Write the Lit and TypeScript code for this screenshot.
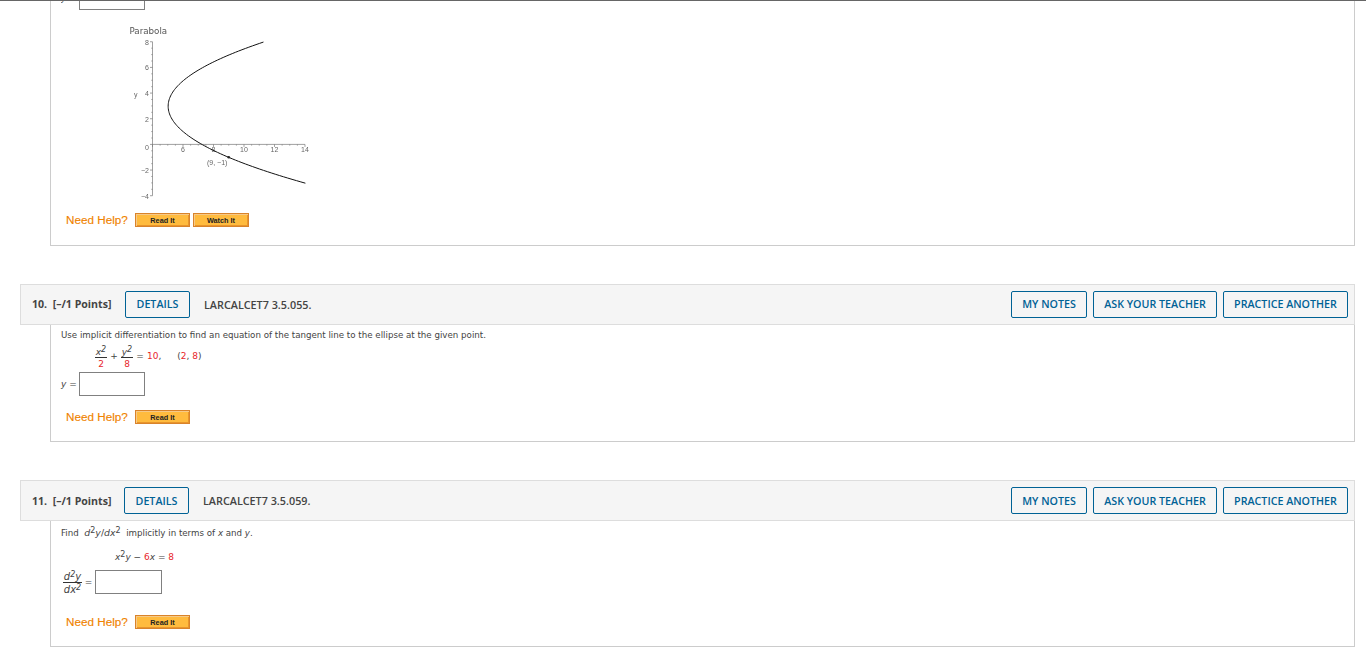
import { LitElement, html, css, svg } from "lit";
import { customElement } from "lit/decorators.js";

const xp = (x: number) => 152.5 + (x - 4) * 15.25 - 120;
const yp = (y: number) => 144.4 - y * 12.83 - 20;

function curve() {
  const pts: string[] = [];
  for (let y = 8; y >= -3; y -= 0.1) {
    const x = 5 + ((y - 3) * (y - 3)) / 4;
    pts.push(`${(xp(x) + 0.4).toFixed(2)},${(yp(y) + 0.3).toFixed(2)}`);
  }
  return pts.join(" ");
}

function graph() {
  const ticks = [];
  for (let v = -4; v <= 8; v += 0.5) {
    const major = v % 2 === 0;
    ticks.push(svg`<line x1=${xp(4) - (major ? 2.5 : 1.2)} x2=${xp(4)} y1=${yp(v)} y2=${yp(v)} class="ax"></line>`);
  }
  for (let v = 4; v <= 14; v += 0.5) {
    const major = v % 2 === 0;
    ticks.push(svg`<line x1=${xp(v)} x2=${xp(v)} y1=${yp(0)} y2=${yp(0) + (major ? 2.5 : 1.2)} class="ax"></line>`);
  }
  const ylabels: [number, string, number][] = [[8, "8", 3], [6, "6", 3], [4, "4", 3], [2, "2", 3], [0, "0", 6], [-2, "−2", 3], [-4, "−4", 3]];
  const xlabels = [6, 8, 10, 12, 14];
  return html`<svg class="graph" width="200" height="185" viewBox="0 0 200 185">
    <line x1=${xp(4)} x2=${xp(4)} y1=${yp(8)} y2=${yp(-4)} class="ax"></line>
    <line x1=${xp(4)} x2=${xp(14)} y1=${yp(0)} y2=${yp(0)} class="ax"></line>
    ${ticks}
    ${ylabels.map(([v, t, d]) => svg`<text class="lb" x=${xp(4) - 3.5} y=${yp(v) + d} text-anchor="end">${t}</text>`)}
    ${xlabels.map((v) => svg`<text class="lb" x=${xp(v)} y=${yp(0) + 7.5} text-anchor="middle">${v}</text>`)}
    <text class="lb" x="14" y="77">y</text>
    <text class="lb" x="87" y="144.5">(9, −1)</text>
    <polyline points=${curve()} fill="none" stroke="#111" stroke-width="1"></polyline>
    <circle cx=${xp(9)} cy=${yp(-1)} r="1.3" fill="#222"></circle>
    <text class="title" x="9.5" y="14">Parabola</text>
  </svg>`;
}

@customElement("app-root")
export class AppRoot extends LitElement {
  static styles = css`
    :host { display: block; width: 1366px; height: 648px; overflow: hidden; background: #fff; font-family: "DejaVu Sans", sans-serif; font-size: 8.68px; color: #444; }
    .topline { height: 1px; background: #666; }
    .box { margin: 0 11px 0 50px; border: 1px solid #ccc; border-top: 0; position: relative; box-sizing: border-box; }
    .first { height: 245px; padding-left: 10px; }
    .clip { display: flex; align-items: flex-start; height: 9px; }
    .clipy { width: 18px; height: 3px; overflow: hidden; font-style: italic; line-height: 11px; }
    .clipy span { display: block; margin-top: -8px; }
    .cutinput { width: 66px; height: 9px; border: 1px solid #808080; border-top: 0; box-sizing: border-box; }
    .graph { display: block; margin: 10px 0 8px 59px; filter: blur(0.3px); }
    .ax { stroke: #777; stroke-width: 0.7; }
    .lb { font: 7px "Liberation Sans", sans-serif; fill: #666; }
    .title { font: 8.7px "DejaVu Sans", sans-serif; fill: #555; }
    .help { display: flex; align-items: center; margin-left: 5px; height: 14px; }
    .need { font: 11.7px "Liberation Sans", sans-serif; color: #f08300; width: 69px; -webkit-text-stroke: 0.15px #f08300; white-space: nowrap; padding-bottom: 2px; }
    .btn { box-sizing: border-box; height: 14px; margin-right: 3px; border: 1px solid #d9832a; background: #ffbb3e; box-shadow: inset 1px 1px 0 #f6c988, inset -1px -1px 0 #e8952c; display: flex; align-items: center; justify-content: center; font: bold 7.3px "Liberation Sans", sans-serif; color: #222; }
    .w55 { width: 55px; } .w56 { width: 56px; }
    .head { margin: 0 11px 0 20px; height: 41px; box-sizing: border-box; border: 1px solid #ddd; background: #f5f5f5; display: flex; align-items: center; font-family: "Open Sans", sans-serif; font-size: 10.8px; font-weight: 600; color: #444; padding: 0 6px 1px 10px; }
    .low { padding-bottom: 0; }
    .pts { white-space: pre; font-weight: 700; font-size: 10.6px; padding-left: 1px; box-sizing: border-box; }
    .bt { box-sizing: border-box; height: 27px; border: 1px solid #006295; border-radius: 2px; color: #006295; display: flex; align-items: center; justify-content: center; font-size: 10.7px; font-weight: 600; margin-right: 6px; }
    .bt:last-child { margin-right: 0; }
    .ref { margin-left: 14px; flex: 1; }
    .details { width: 65px; margin: 0; }
    .mn { width: 76px; } .ask { width: 124px; } .pa { width: 125px; }
    .q10 { height: 117px; padding: 5px 0 0 10px; }
    .q11 { height: 126px; padding: 6px 0 0 10px; }
    .p { line-height: 11px; height: 11px; white-space: pre; }
    .i { font-style: italic; }
    .m { font-size: 9.4px; }
    .r { color: #e8252a; }
    .eq { display: flex; align-items: flex-start; font-size: 9px; }
    .frac { display: inline-flex; flex-direction: column; align-items: center; font-size: 9px; }
    .num { box-sizing: content-box; border-bottom: 1px solid #333; height: 12px; line-height: 14px; text-align: center; }
    .den { line-height: 13px; height: 13px; }
    .w12 { width: 12px; } .w19 { width: 19px; }
    sup { font-size: 8px; line-height: 0; vertical-align: 3.5px; }
    .eq10 { margin: 4px 0 0 34px; height: 26px; }
    .t { margin-top: 6px; line-height: 11px; white-space: pre; }
    .ans { display: flex; align-items: center; }
    .input { width: 66px; height: 24px; border: 1px solid #808080; box-sizing: border-box; background: #fff; }
    .ans10 { margin-top: 1px; height: 24px; font-size: 9px; }
    .ly { width: 18px; }
    .eq11 { margin: 14px 0 0 54px; height: 11px; line-height: 11px; white-space: pre; font-size: 9px; }
    .ans11 { margin-top: 4px; height: 30px; font-size: 9px; padding-left: 2px; }
    .ans11 .frac { margin-top: 2px; font-size: 10px; }
    .i11 { width: 67px; }
    .eqs { width: 13px; text-align: center; }
  `;

  needHelp(watch = false) {
    return html`<div class="help"><span class="need">Need Help?</span><span class="btn w55">Read It</span>${watch ? html`<span class="btn w56">Watch It</span>` : ""}</div>`;
  }

  header(n: string, ref: string, w: string, cls = "") {
    return html`<div class="head ${cls}">
      <span class="pts" style="width:${w}">${n}  [–/1 Points]</span>
      <span class="bt details">DETAILS</span>
      <span class="ref">${ref}</span>
      <span class="bt mn">MY NOTES</span><span class="bt ask">ASK YOUR TEACHER</span><span class="bt pa">PRACTICE ANOTHER</span>
    </div>`;
  }

  render() {
    return html`
      <div class="topline"></div>
      <div class="box first">
        <div class="clip"><span class="clipy"><span>y</span></span><div class="cutinput"></div></div>
        ${graph()}
        ${this.needHelp(true)}
      </div>
      <div style="height:38px"></div>
      ${this.header("10.", "LARCALCET7 3.5.055.", "94px")}
      <div class="box q10">
        <div class="p">Use implicit differentiation to find an equation of the tangent line to the ellipse at the given point.</div>
        <div class="eq eq10">
          <span class="frac"><span class="num i w12">x<sup>2</sup></span><span class="r den">2</span></span>
          <span class="t" style="width:14px;text-align:center">+</span>
          <span class="frac"><span class="num i w12">y<sup>2</sup></span><span class="r den">8</span></span>
          <span class="t" style="width:14px;text-align:center">=</span>
          <span class="t"><span class="r">10</span>,</span>
          <span class="t" style="margin-left:16px">(<span class="r">2</span>, <span class="r">8</span>)</span>
        </div>
        <div class="ans ans10"><span class="ly"><span class="i">y</span> =</span><div class="input"></div></div>
        <div style="height:14px"></div>
        ${this.needHelp()}
      </div>
      <div style="height:38px"></div>
      ${this.header("11.", "LARCALCET7 3.5.059.", "93px", "low")}
      <div class="box q11">
        <div class="p">Find  <span class="m"><span class="i">d</span><sup>2</sup><span class="i">y</span>/<span class="i">dx</span><sup>2</sup></span>  implicitly in terms of <span class="i">x</span> and <span class="i">y</span>.</div>
        <div class="eq11"><span class="i">x</span><sup>2</sup><span class="i">y</span> − <span class="r">6</span><span class="i">x</span> = <span class="r">8</span></div>
        <div class="ans ans11">
          <span class="frac"><span class="num i w19">d<sup>2</sup>y</span><span class="i den">dx<sup>2</sup></span></span>
          <span class="eqs">=</span>
          <div class="input i11"></div>
        </div>
        <div style="height:18px"></div>
        ${this.needHelp()}
      </div>
    `;
  }
}
